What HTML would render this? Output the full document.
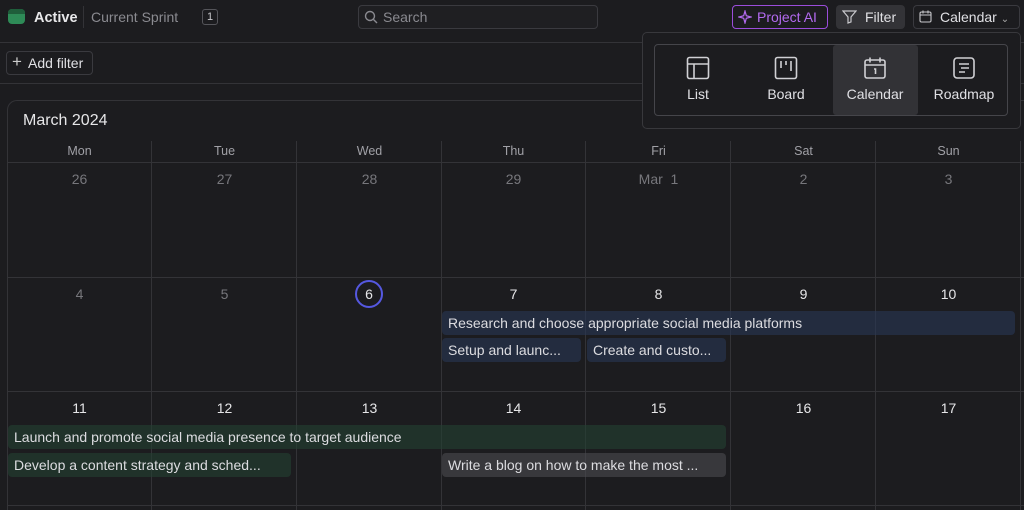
<!DOCTYPE html>
<html style="width:1024px;height:510px;overflow:hidden"><head><meta charset="utf-8"><style>
*{box-sizing:border-box;margin:0;padding:0}
body{width:1024px;height:510px;background:#1c1c1f;font-family:"Liberation Sans",sans-serif;color:#e6e6e8;position:relative;overflow:hidden;font-size:14px}
.a{position:absolute}
.hl{position:absolute;left:0;right:0;height:1px;background:#333337}
.vl{position:absolute;width:1px;background:#333337}
.d{position:absolute;width:145px;text-align:center;font-size:14px;color:#e6e6e8}
.dim{color:#77777c}
.wd{position:absolute;width:145px;text-align:center;font-size:12.5px;color:#a0a0a6;top:144px}
.ev{position:absolute;height:24px;border-radius:4px;font-size:14px;line-height:24px;padding-left:6px;color:#dcdce0;white-space:nowrap;overflow:hidden}
.b{background:rgba(40,55,85,.6)}
.g{background:rgba(35,65,50,.6)}
.k{background:rgba(75,75,80,.6)}
.vi{position:absolute;top:14px;width:86px;height:70px;text-align:center;font-size:14px;color:#e0e0e4}
.vi svg{display:block;margin:12px auto 6px}
</style></head><body>
<div class="a" style="left:8px;top:9px;width:17px;height:15px;border-radius:4px;background:#2e8b57"></div>
<div class="a" style="left:8px;top:9px;width:17px;height:5px;border-radius:4px 4px 0 0;background:#1f5e3b"></div>
<div class="a" style="left:34px;top:10px;font-size:14.5px;font-weight:bold;color:#e8e8ea">Active</div>
<div class="a" style="left:83px;top:6px;width:1px;height:22px;background:#333337"></div>
<div class="a" style="left:91px;top:9px;font-size:14px;color:#8a8a90">Current Sprint</div>
<div class="a" style="left:202px;top:9px;width:16px;height:16px;border:1px solid #55555a;border-radius:3px;font-size:11px;text-align:center;line-height:14px;color:#c8c8cc">1</div>
<div class="a" style="left:358px;top:5px;width:240px;height:24px;border:1px solid #3a3a3f;border-radius:4px;background:#1f1f22"></div>
<svg class="a" style="left:364px;top:10px" width="14" height="14" viewBox="0 0 14 14"><circle cx="6" cy="6" r="4.5" fill="none" stroke="#8a8a90" stroke-width="1.4"/><path d="M9.5 9.5L13 13" stroke="#8a8a90" stroke-width="1.4"/></svg>
<div class="a" style="left:383px;top:9px;color:#8a8a90;font-size:14px">Search</div>
<div class="a" style="left:732px;top:5px;width:96px;height:24px;border:1px solid #9b4ddb;border-radius:4px;color:#b36af0;font-size:14px;line-height:22px;padding-left:24px">Project AI</div>
<svg class="a" style="left:738px;top:10px" width="14" height="14" viewBox="0 0 14 14"><path d="M7 1L8.3 5.7 13 7 8.3 8.3 7 13 5.7 8.3 1 7 5.7 5.7Z" fill="none" stroke="#b36af0" stroke-width="1.2"/></svg>
<div class="a" style="left:836px;top:5px;width:69px;height:24px;background:#333337;border-radius:4px;font-size:14px;line-height:24px;padding-left:29px;color:#e0e0e4">Filter</div>
<svg class="a" style="left:842px;top:10px" width="15" height="14" viewBox="0 0 15 14"><path d="M1 1h13L9 7v5L6 13V7Z" fill="none" stroke="#c8c8cc" stroke-width="1.2"/></svg>
<div class="a" style="left:913px;top:5px;width:107px;height:24px;border:1px solid #3a3a3f;border-radius:4px;font-size:14px;line-height:22px;padding-left:26px;color:#e0e0e4">Calendar <span style="font-size:10px;color:#aaa">&#8964;</span></div>
<svg class="a" style="left:919px;top:10px" width="13" height="13" viewBox="0 0 13 13"><rect x="1" y="2" width="11" height="10" rx="1.5" fill="none" stroke="#c8c8cc" stroke-width="1.1"/><path d="M1 5h11M4 0.5v3M9 0.5v3" stroke="#c8c8cc" stroke-width="1.1"/></svg>
<div class="hl" style="top:42px"></div>
<div class="a" style="left:6px;top:51px;width:87px;height:24px;border:1px solid #3a3a3f;border-radius:4px;font-size:14px;line-height:22px;padding-left:21px;color:#e0e0e4">Add filter</div>
<div class="a" style="left:12px;top:51px;font-size:17px;line-height:22px;color:#ccc">+</div>
<div class="hl" style="top:83px"></div>
<div class="a" style="left:7px;top:100px;width:1017px;height:420px;border:1px solid #333337;border-right:none;border-bottom:none;border-radius:10px 0 0 0"></div>
<div class="a" style="left:23px;top:112px;font-size:16px;color:#e6e6e8">March 2024</div>
<div class="wd" style="left:7px">Mon</div><div class="wd" style="left:152px">Tue</div><div class="wd" style="left:297px">Wed</div><div class="wd" style="left:441px">Thu</div><div class="wd" style="left:586px">Fri</div><div class="wd" style="left:731px">Sat</div><div class="wd" style="left:876px">Sun</div>
<div class="hl" style="top:162px;left:7px"></div>
<div class="hl" style="top:277px;left:7px"></div>
<div class="hl" style="top:391px;left:7px"></div>
<div class="hl" style="top:505px;left:7px"></div>
<div class="vl" style="left:151px;top:141px;height:369px"></div>
<div class="vl" style="left:296px;top:141px;height:369px"></div>
<div class="vl" style="left:441px;top:141px;height:369px"></div>
<div class="vl" style="left:585px;top:141px;height:369px"></div>
<div class="vl" style="left:730px;top:141px;height:369px"></div>
<div class="vl" style="left:875px;top:141px;height:369px"></div>
<div class="vl" style="left:1020px;top:141px;height:369px"></div>
<div class="d dim" style="left:7px;top:171px">26</div><div class="d dim" style="left:152px;top:171px">27</div><div class="d dim" style="left:297px;top:171px">28</div><div class="d dim" style="left:441px;top:171px">29</div><div class="d dim" style="left:586px;top:171px">Mar&nbsp; 1</div><div class="d dim" style="left:731px;top:171px">2</div><div class="d dim" style="left:876px;top:171px">3</div>
<div class="d dim" style="left:7px;top:286px">4</div><div class="d dim" style="left:152px;top:286px">5</div>
<div class="a" style="left:355px;top:280px;width:28px;height:28px;border:2px solid #5558e0;border-radius:50%;text-align:center;line-height:24px;font-size:14px">6</div>
<div class="d" style="left:441px;top:286px">7</div><div class="d" style="left:586px;top:286px">8</div><div class="d" style="left:731px;top:286px">9</div><div class="d" style="left:876px;top:286px">10</div>
<div class="ev b" style="left:442px;top:311px;width:573px">Research and choose appropriate social media platforms</div>
<div class="ev b" style="left:442px;top:338px;width:139px">Setup and launc...</div>
<div class="ev b" style="left:587px;top:338px;width:139px">Create and custo...</div>
<div class="d" style="left:7px;top:400px">11</div><div class="d" style="left:152px;top:400px">12</div><div class="d" style="left:297px;top:400px">13</div><div class="d" style="left:441px;top:400px">14</div><div class="d" style="left:586px;top:400px">15</div><div class="d" style="left:731px;top:400px">16</div><div class="d" style="left:876px;top:400px">17</div>
<div class="ev g" style="left:8px;top:425px;width:718px">Launch and promote social media presence to target audience</div>
<div class="ev g" style="left:8px;top:453px;width:283px">Develop a content strategy and sched...</div>
<div class="ev k" style="left:442px;top:453px;width:284px">Write a blog on how to make the most ...</div>
<div class="a" style="left:642px;top:32px;width:379px;height:97px;background:#1c1c1f;border:1px solid #38383c;border-radius:5px"></div>
<div class="a" style="left:654px;top:44px;width:354px;height:72px;border:1px solid #45454a;border-radius:4px"></div>
<div class="a" style="left:833px;top:45px;width:85px;height:70px;background:#323236;border-radius:3px"></div>
<div class="vi" style="left:655px;top:44px"><svg width="24" height="24" viewBox="0 0 24 24"><rect x="1.5" y="1.5" width="21" height="21" rx="2" fill="none" stroke="#d0d0d4" stroke-width="1.6"/><path d="M1.5 8h21M8 8v14.5" stroke="#d0d0d4" stroke-width="1.6"/></svg>List</div>
<div class="vi" style="left:743px;top:44px"><svg width="24" height="24" viewBox="0 0 24 24"><rect x="1.5" y="1.5" width="21" height="21" rx="2" fill="none" stroke="#d0d0d4" stroke-width="1.6"/><path d="M7 5v7M12 5v4M17 5v10" stroke="#d0d0d4" stroke-width="1.6"/></svg>Board</div>
<div class="vi" style="left:832px;top:44px"><svg width="24" height="24" viewBox="0 0 24 24"><rect x="2" y="4" width="20" height="18" rx="2" fill="none" stroke="#d0d0d4" stroke-width="1.6"/><path d="M2 9h20M7 1.5v5M17 1.5v5M11 13h1.5v5" stroke="#d0d0d4" stroke-width="1.6"/></svg>Calendar</div>
<div class="vi" style="left:921px;top:44px"><svg width="24" height="24" viewBox="0 0 24 24"><rect x="2" y="2" width="20" height="20" rx="3" fill="none" stroke="#d0d0d4" stroke-width="1.6"/><path d="M7 8h10M9 12h8M7 16h6" stroke="#d0d0d4" stroke-width="1.6"/></svg>Roadmap</div>
</body></html>
